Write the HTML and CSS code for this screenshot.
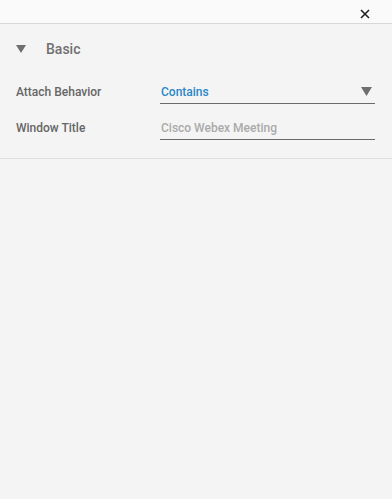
FILE: index.html
```html
<!DOCTYPE html>
<html>
<head>
<meta charset="utf-8">
<link rel="stylesheet" href="styles.css">
</head>
<body>
<div class="topbar">
  <button class="close" aria-label="Close">
    <svg width="10" height="10" viewBox="0 0 10 10"><path d="M1 1L9 9M9 1L1 9" stroke="#222" stroke-width="1.6" fill="none"/></svg>
  </button>
</div>
<section class="section">
  <div class="section-head">
    <svg class="caret" width="10" height="8" viewBox="0 0 10 8"><path d="M0 0H10L5 8Z" fill="#6f6f6f"/></svg>
    <span class="section-title">Basic</span>
  </div>
  <div class="rows">
    <div class="row">
      <label class="label">Attach Behavior</label>
      <div class="field select">
        <span class="value">Contains</span>
        <svg class="arrow" width="11" height="9" viewBox="0 0 11 9"><path d="M0 0H11L5.5 9Z" fill="#6f6f6f"/></svg>
      </div>
    </div>
    <div class="row">
      <label class="label">Window Title</label>
      <div class="field">
        <span class="placeholder">Cisco Webex Meeting</span>
      </div>
    </div>
  </div>
</section>
</body>
</html>
```
FILE: styles.css
```css
html, body {
  margin: 0;
  padding: 0;
  height: 100%;
}
body {
  background: #f4f4f4;
  font-family: Roboto, "Noto Sans", Arial, sans-serif;
}
.topbar {
  height: 23px;
  background: #fafafa;
  border-bottom: 1px solid #d6d6d6;
  display: flex;
  justify-content: flex-end;
  align-items: center;
  padding-right: 22px;
}
.close {
  border: 0;
  background: none;
  padding: 0;
  display: flex;
  margin-top: 4px;
}
.section {
  border-bottom: 1px solid #dedede;
  padding-bottom: 18px;
}
.section-head {
  display: flex;
  align-items: center;
  height: 46px;
  padding: 2px 0 0 16px;
}
.section-title {
  margin-left: 20px;
  font-size: 14px;
  font-weight: 500;
  color: #707070;
}
.rows {
  display: flex;
  flex-direction: column;
  gap: 4px;
}
.row {
  display: flex;
  align-items: flex-end;
  padding-left: 16px;
  height: 32px;
}
.label {
  width: 144px;
  font-size: 12px;
  line-height: 14px;
  font-weight: 500;
  color: #666;
  padding-bottom: 5px;
}
.field {
  width: 215px;
  height: 32px;
  border-bottom: 1px solid #6a6a6a;
  display: flex;
  align-items: flex-end;
  justify-content: space-between;
  box-sizing: border-box;
  padding: 0 3px 4px 1px;
}
.value {
  font-size: 12px;
  line-height: 14px;
  font-weight: 500;
  color: #2a87c8;
}
.arrow {
  margin-bottom: 3px;
}
.placeholder {
  font-size: 12px;
  line-height: 14px;
  font-weight: 500;
  color: #aaa;
}
```
